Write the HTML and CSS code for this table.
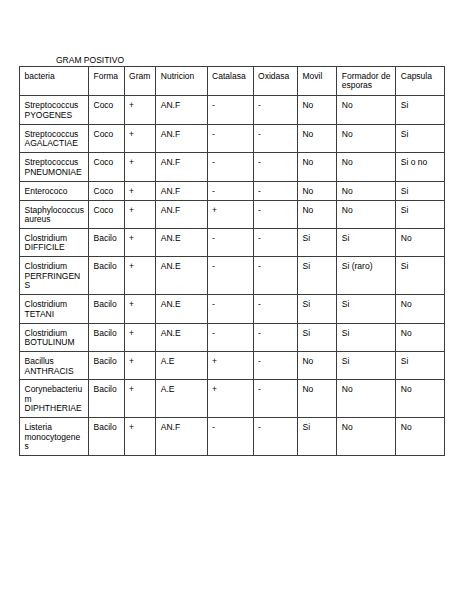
FILE: index.html
```html
<!DOCTYPE html>
<html lang="es">
<head>
<meta charset="utf-8">
<link rel="stylesheet" href="styles.css">
<title>Gram positivo</title>
</head>
<body>
<div class="page">
  <div class="title">GRAM POSITIVO</div>
  <table class="grid">
    <colgroup>
      <col class="c1"><col class="c2"><col class="c3"><col class="c4"><col class="c5"><col class="c6"><col class="c7"><col class="c8"><col class="c9">
    </colgroup>
    <thead>
      <tr><th>bacteria</th><th>Forma</th><th>Gram</th><th>Nutricion</th><th>Catalasa</th><th>Oxidasa</th><th>Movil</th><th>Formador de esporas</th><th>Capsula</th></tr>
    </thead>
    <tbody>
      <tr><td>Streptococcus PYOGENES</td><td>Coco</td><td>+</td><td>AN.F</td><td>-</td><td>-</td><td>No</td><td>No</td><td>Si</td></tr>
      <tr><td>Streptococcus AGALACTIAE</td><td>Coco</td><td>+</td><td>AN.F</td><td>-</td><td>-</td><td>No</td><td>No</td><td>Si</td></tr>
      <tr><td>Streptococcus PNEUMONIAE</td><td>Coco</td><td>+</td><td>AN.F</td><td>-</td><td>-</td><td>No</td><td>No</td><td>Si o no</td></tr>
      <tr><td>Enterococo</td><td>Coco</td><td>+</td><td>AN.F</td><td>-</td><td>-</td><td>No</td><td>No</td><td>Si</td></tr>
      <tr><td>Staphylococcus aureus</td><td>Coco</td><td>+</td><td>AN.F</td><td>+</td><td>-</td><td>No</td><td>No</td><td>Si</td></tr>
      <tr><td>Clostridium DIFFICILE</td><td>Bacilo</td><td>+</td><td>AN.E</td><td>-</td><td>-</td><td>Si</td><td>Si</td><td>No</td></tr>
      <tr><td>Clostridium PERFRINGENS</td><td>Bacilo</td><td>+</td><td>AN.E</td><td>-</td><td>-</td><td>Si</td><td>Si (raro)</td><td>Si</td></tr>
      <tr><td>Clostridium TETANI</td><td>Bacilo</td><td>+</td><td>AN.E</td><td>-</td><td>-</td><td>Si</td><td>Si</td><td>No</td></tr>
      <tr><td>Clostridium BOTULINUM</td><td>Bacilo</td><td>+</td><td>AN.E</td><td>-</td><td>-</td><td>Si</td><td>Si</td><td>No</td></tr>
      <tr><td>Bacillus ANTHRACIS</td><td>Bacilo</td><td>+</td><td>A.E</td><td>+</td><td>-</td><td>No</td><td>Si</td><td>Si</td></tr>
      <tr><td>Corynebacterium DIPHTHERIAE</td><td>Bacilo</td><td>+</td><td>A.E</td><td>+</td><td>-</td><td>No</td><td>No</td><td>No</td></tr>
      <tr><td>Listeria monocytogenes</td><td>Bacilo</td><td>+</td><td>AN.F</td><td>-</td><td>-</td><td>Si</td><td>No</td><td>No</td></tr>
    </tbody>
  </table>
</div>
</body>
</html>
```

FILE: styles.css
```css
html, body {
  margin: 0;
  padding: 0;
  background: #ffffff;
}

.page {
  padding: 56px 0 0 19px;
  font-family: "Liberation Sans", Arial, sans-serif;
  font-size: 8.5px;
  line-height: 9.45px;
  color: #000;
}

.title {
  margin-left: 37px;
  height: 9.5px;
}

.grid {
  border-collapse: collapse;
  table-layout: fixed;
  width: 425px;
}

.c1 { width: 69px; }
.c2 { width: 35.6px; }
.c3 { width: 31.7px; }
.c4 { width: 51.3px; }
.c5 { width: 46px; }
.c6 { width: 44.4px; }
.c7 { width: 39.3px; }
.c8 { width: 59px; }
.c9 { width: 48.3px; }

.grid th,
.grid td {
  border: 1px solid #3c3c3c;
  padding: 5px 3.75px 3.5px 4.5px;
  text-align: left;
  vertical-align: top;
  font-weight: normal;
  overflow-wrap: break-word;
  word-break: break-word;
}

.grid th {
  padding-top: 5.5px;
  padding-bottom: 4.5px;
}
```
